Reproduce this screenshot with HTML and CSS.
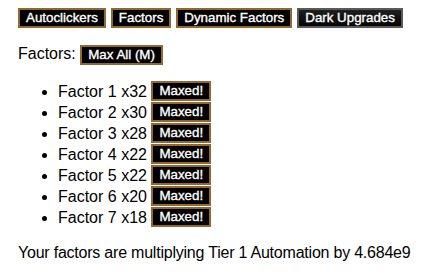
FILE: index.html
```html
<!DOCTYPE html>
<html>
<head>
<meta charset="utf-8">
<link rel="stylesheet" href="styles.css">
</head>
<body>
<div class="page">
  <div class="tabs">
    <button class="btn">Autoclickers</button>
    <button class="btn">Factors</button>
    <button class="btn">Dynamic Factors</button>
    <button class="btn dark">Dark Upgrades</button>
  </div>
  <p class="head">Factors: <button class="btn">Max All (M)</button></p>
  <ul class="list">
    <li>Factor 1 x32 <button class="btn">Maxed!</button></li>
    <li>Factor 2 x30 <button class="btn">Maxed!</button></li>
    <li>Factor 3 x28 <button class="btn">Maxed!</button></li>
    <li>Factor 4 x22 <button class="btn">Maxed!</button></li>
    <li>Factor 5 x22 <button class="btn">Maxed!</button></li>
    <li>Factor 6 x20 <button class="btn">Maxed!</button></li>
    <li>Factor 7 x18 <button class="btn">Maxed!</button></li>
  </ul>
  <p class="foot">Your factors are multiplying Tier 1 Automation by 4.684e9</p>
</div>
</body>
</html>
```

FILE: styles.css
```css
html, body {
  margin: 0;
  padding: 0;
  background: #fff;
}
body {
  padding: 8px;
  font-family: "Liberation Sans", Arial, sans-serif;
  font-size: 16px;
  color: #000;
}
.page {
  margin-left: 10px;
}
.tabs {
  display: flex;
  gap: 5px;
}
.btn {
  font-family: "Liberation Sans", Arial, sans-serif;
  font-size: 13.333px;
  font-weight: normal;
  line-height: 14px;
  color: #fff;
  -webkit-text-stroke: 0.35px #fff;
  background: #000;
  border: 2px solid #94672f;
  padding: 1px 6px;
  margin: 0;
  cursor: pointer;
  vertical-align: middle;
}
.btn.dark {
  border-color: #5a5a5a;
  background: linear-gradient(#1e1e1e, #050505);
}
.head {
  margin: 16px 0 0;
  line-height: 20px;
}
.list {
  margin: 16px 0 0;
  padding-left: 40px;
}
.list li {
  line-height: 21px;
}
.list .btn {
  vertical-align: top;
}
.foot {
  margin: 16px 0 0;
  white-space: nowrap;
  letter-spacing: -0.22px;
}
```
